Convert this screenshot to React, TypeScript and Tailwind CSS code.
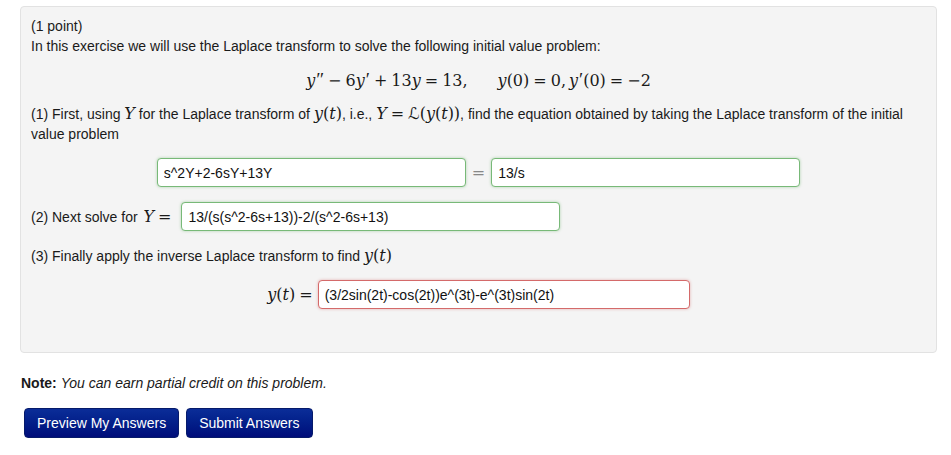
import React, { useState } from 'react';

function V({ children }: { children: React.ReactNode }) {
  return <span className="italic">{children}</span>;
}

function P({ n = 1 }: { n?: number }) {
  return <span className="font-['Liberation_Serif',serif] text-[19px] ml-[1px]">{n === 2 ? '″' : '′'}</span>;
}

function Mth({ children, className = '' }: { children: React.ReactNode; className?: string }) {
  return (
    <span className={`font-['DejaVu_Serif',serif] text-[16px] leading-[20px] whitespace-nowrap ${className}`}>
      {children}
    </span>
  );
}

function Op({ children }: { children: React.ReactNode }) {
  return <span className="mx-[4px]">{children}</span>;
}

function AnsBox({ value, onChange, width, status }: { value: string; onChange: (v: string) => void; width: string; status: 'ok' | 'bad' }) {
  const ring =
    status === 'ok'
      ? 'border-[#78b978] shadow-[0_0_3px_rgba(90,170,90,0.45)]'
      : 'border-[#d46a6a] shadow-[0_0_3px_rgba(210,90,90,0.45)]';
  return (
    <input
      type="text"
      value={value}
      onChange={(e) => onChange(e.target.value)}
      className={`${width} h-[29px] rounded-[4px] border bg-white px-[6px] text-[14px] text-[#111] outline-none ${ring}`}
    />
  );
}

function App() {
  const [a1, setA1] = useState('s^2Y+2-6sY+13Y');
  const [a2, setA2] = useState('13/s');
  const [a3, setA3] = useState('13/(s(s^2-6s+13))-2/(s^2-6s+13)');
  const [a4, setA4] = useState('(3/2sin(2t)-cos(2t))e^(3t)-e^(3t)sin(2t)');

  return (
    <div className="min-h-screen bg-white font-['Liberation_Sans',Arial,sans-serif] text-[14px] leading-[20px] text-[#1a1a1a]">
      <div className="ml-[20px] mr-[14px] pt-[6px]">
        <div className="rounded-[4px] border border-[#e2e2e2] bg-[#f4f4f4] px-[10px] pt-[9px] pb-[43px]">
          <div>(1 point)</div>
          <div>In this exercise we will use the Laplace transform to solve the following initial value problem:</div>

          <div className="mt-[13px] flex h-[22px] items-center justify-center">
            <Mth>
              <V>y</V><P n={2} /><Op>−</Op>6<V>y</V><P /><Op>+</Op>13<V>y</V><Op>=</Op>13,
            </Mth>
            <Mth className="ml-[30px]">
              <V>y</V>(0)<Op>=</Op>0,<span className="ml-[3px]"><V>y</V><P />(0)</span><Op>=</Op>−2
            </Mth>
          </div>

          <div className="mt-[13px]">
            (1) First, using <Mth><V>Y</V></Mth> for the Laplace transform of <Mth><V>y</V>(<V>t</V>)</Mth>, i.e.,{' '}
            <Mth><V>Y</V><Op>=</Op><span className="font-['DejaVu_Sans',sans-serif]">ℒ</span>(<V>y</V>(<V>t</V>))</Mth>, find the equation obtained by taking the Laplace transform of the initial value problem
          </div>

          <div className="mt-[14px] flex items-center justify-center">
            <AnsBox value={a1} onChange={setA1} width="w-[309px]" status="ok" />
            <Mth className="mx-[6px] text-[#888]">=</Mth>
            <AnsBox value={a2} onChange={setA2} width="w-[309px]" status="ok" />
          </div>

          <div className="mt-[15px] flex items-center">
            <span>(2) Next solve for&nbsp;</span>
            <Mth className="ml-[2px]"><V>Y</V><Op>=</Op></Mth>
            <span className="ml-[6px]">
              <AnsBox value={a3} onChange={setA3} width="w-[379px]" status="ok" />
            </span>
          </div>

          <div className="mt-[15px]">
            (3) Finally apply the inverse Laplace transform to find <Mth><V>y</V>(<V>t</V>)</Mth>
          </div>

          <div className="mt-[14px] flex items-center justify-center">
            <Mth><V>y</V>(<V>t</V>)<Op>=</Op></Mth>
            <span className="ml-[1px]">
              <AnsBox value={a4} onChange={setA4} width="w-[372px]" status="bad" />
            </span>
          </div>
        </div>

        <div className="mt-[20px] ml-[1px]">
          <span className="font-bold">Note:</span> <span className="italic">You can earn partial credit on this problem.</span>
        </div>

        <div className="mt-[15px] ml-[4px] flex gap-[7px]">
          <button className="h-[30px] rounded-[4px] border border-[#061a6a] bg-gradient-to-b from-[#0b2d98] to-[#000c7a] px-[12px] text-[14px] text-white">
            Preview My Answers
          </button>
          <button className="h-[30px] rounded-[4px] border border-[#061a6a] bg-gradient-to-b from-[#0b2d98] to-[#000c7a] px-[12px] text-[14px] text-white">
            Submit Answers
          </button>
        </div>
      </div>
    </div>
  );
}

export default App;
